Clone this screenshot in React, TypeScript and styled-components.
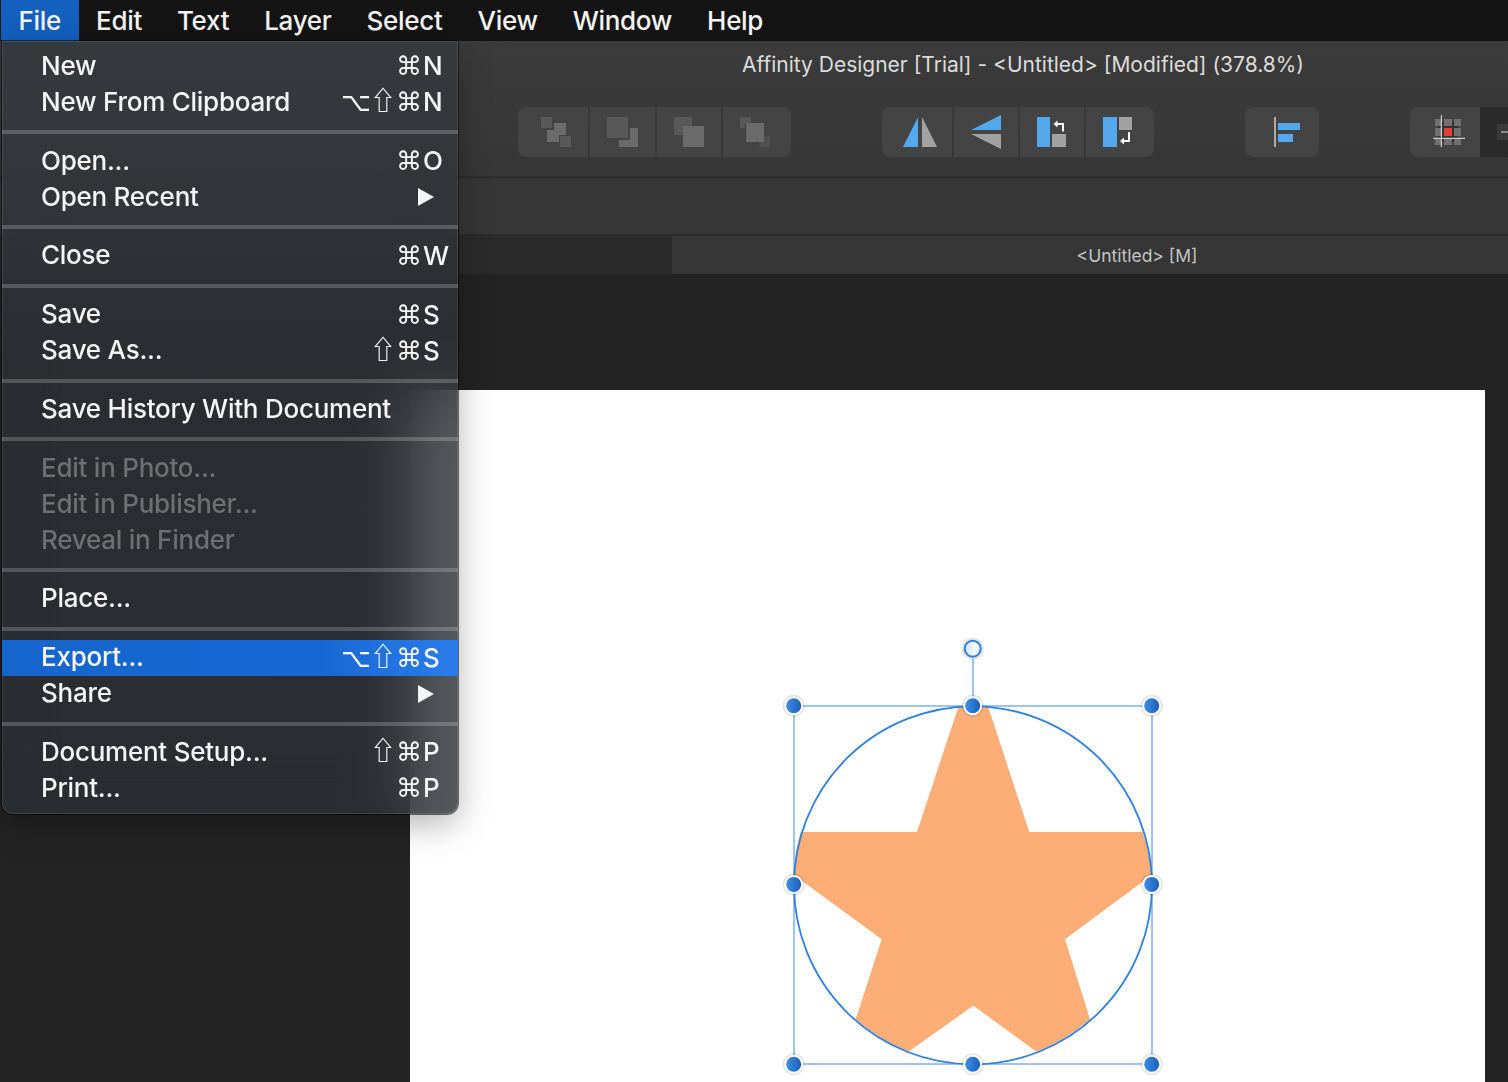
import { type ReactNode } from 'react'
import styled, { createGlobalStyle } from 'styled-components'

const GlobalStyle = createGlobalStyle`
  html, body {
    margin: 0;
    padding: 0;
    background: #232323;
  }

  body {
    font-family: Inter, "Liberation Sans", sans-serif;
  }
`

const Window = styled.div`
  position: relative;
  width: 1508px;
  height: 1082px;
  overflow: hidden;
  display: flex;
  flex-direction: column;
  background: #232323;
`

const MenuBar = styled.div`
  display: flex;
  height: 41px;
  padding-left: 1px;
  background: #141414;
  flex-shrink: 0;
`

const BarItem = styled.div<{ $active?: boolean }>`
  display: flex;
  align-items: center;
  padding: 0 17.5px;
  font-size: 26px;
  font-weight: 450;
  letter-spacing: -0.3px;
  color: #f4f4f4;
  background: ${p => (p.$active ? '#1360bf' : 'transparent')};
`

const Chrome = styled.div`
  flex-shrink: 0;
  background: linear-gradient(#3b3b3b, #353535);
`

const TitleBar = styled.div`
  height: 48px;
  box-sizing: border-box;
  padding: 0 0 2px 538px;
  display: flex;
  align-items: center;
  justify-content: center;
  font-size: 21px;
  color: #dcdcdc;
`

const Toolbar = styled.div`
  display: flex;
  gap: 91px;
  padding: 18px 0 19px 518px;
  border-bottom: 2px solid #2d2d2d;
`

const ToolGroup = styled.div<{ $flat?: boolean }>`
  display: flex;
  gap: 2px;
  height: 50px;
  border-radius: ${p => (p.$flat ? '8px 0 0 8px' : '8px')};
  overflow: hidden;
  flex-shrink: 0;
`

const ToolButton = styled.div<{ $w: number }>`
  width: ${p => p.$w}px;
  height: 50px;
  background: #444444;

  svg {
    display: block;
  }
`

const SnapCluster = styled.div`
  display: flex;
  flex-shrink: 0;
`

const ZoomSlot = styled.div`
  display: flex;
  align-items: center;
  width: 120px;
  height: 50px;
  padding-left: 17px;
  background: #2a2a2a;
  flex-shrink: 0;
`

const ZoomMinus = styled.div`
  display: flex;
  align-items: center;
  width: 40px;
  height: 16px;
  padding-left: 4px;
  background: #3a3a3a;

  &::before {
    content: '';
    width: 7px;
    height: 2px;
    background: #8a8a8a;
  }
`

const ContextBar = styled.div`
  height: 56px;
  background: #363636;
`

const TabBar = styled.div`
  display: flex;
  height: 40px;
  box-sizing: border-box;
  padding: 2px 0 0 672px;
  flex-shrink: 0;
  background: #2b2b2b;
`

const Tab = styled.div`
  flex: 1;
  padding-left: 94px;
  display: flex;
  align-items: center;
  justify-content: center;
  background: #363636;
  font-size: 17.5px;
  color: #c4c4c4;
`

const Canvas = styled.div`
  flex: 1;
  padding: 116px 23px 0 410px;
  background: #232323;
`

const Artboard = styled.div`
  height: 100%;
  background: #ffffff;

  svg {
    display: block;
  }
`

const Menu = styled.div`
  position: absolute;
  top: 41px;
  left: 2px;
  width: 456px;
  height: 773px;
  box-sizing: border-box;
  padding: 7.3px 0 7.7px;
  border-radius: 0 0 11px 11px;
  background: linear-gradient(rgba(54, 58, 62, 0.8), rgba(44, 48, 52, 0.8) 45%);
  backdrop-filter: blur(30px);
  box-shadow: inset 0 0 0 1px rgba(255, 255, 255, 0.1), 0 0 0 1px rgba(0, 0, 0, 0.55),
    0 10px 34px rgba(0, 0, 0, 0.3);
`

const Row = styled.div<{ $active?: boolean; $disabled?: boolean }>`
  display: grid;
  grid-template-columns: 300px 1fr;
  grid-template-rows: 36px;
  align-items: center;
  height: 36px;
  padding-left: 39px;
  font-size: 26px;
  font-weight: 450;
  letter-spacing: -0.25px;
  white-space: nowrap;
  color: ${p => (p.$disabled ? '#6d7073' : '#f5f5f5')};
  background: ${p =>
    p.$active ? 'linear-gradient(90deg, #1565cc 0%, #1868d4 70%, #2a7de9 100%)' : 'transparent'};
`

const RowLabel = styled.span`
  margin-bottom: 2px;
`

const Separator = styled.div`
  height: 4px;
  margin: 10px 0 8.75px;
  background: rgba(255, 255, 255, 0.2);
`

const Keys = styled.div`
  display: grid;
  grid-template-columns: 29px 26px 27px auto;
  grid-template-rows: 36px;
  height: 36px;
  overflow: visible;
`

const Key = styled.span`
  height: 36px;
  font-family: "DejaVu Sans", sans-serif;
  font-size: 26px;
  line-height: 36px;
`

const ShiftKey = styled(Key)`
  font-family: "Noto Sans CJK JP", "DejaVu Sans", sans-serif;
  transform: translateY(-3px);
`

const KeyLetter = styled.span`
  height: 36px;
  font-size: 26px;
  line-height: 36px;
`

const Arrow = styled.span`
  width: 0;
  height: 0;
  margin-left: 77px;
  border-left: 16px solid #f5f5f5;
  border-top: 9px solid transparent;
  border-bottom: 9px solid transparent;
`

type ToolIconProps = {
  x: number
  w: number
  children: ReactNode
}

// viewBox follows the page coordinates of the toolbar row, easier to measure against
const ToolIcon = ({ x, w, children }: ToolIconProps) => (
  <ToolButton $w={w}>
    <svg width={w} height={50} viewBox={`${x} 107 ${w} 50`}>
      {children}
    </svg>
  </ToolButton>
)

const DIM = '#585858'
const MID = '#6b6b6b'
const BLUE = '#56a8ec'
const GREY = '#a2a2a2'

const ArrangeGroup = () => (
  <ToolGroup>
    <ToolIcon x={518} w={70}>
      <rect x={541} y={117} width={11} height={11} fill={DIM} />
      <rect x={554} y={123} width={12} height={12} fill={MID} />
      <rect x={547} y={130} width={12} height={12} fill={MID} />
      <rect x={560} y={136} width={11} height={11} fill={DIM} />
    </ToolIcon>
    <ToolIcon x={590} w={65}>
      <rect x={607} y={117} width={21} height={21} fill={DIM} />
      <path d="M630 128h8v19h-19v-7h11z" fill={MID} />
    </ToolIcon>
    <ToolIcon x={657} w={64}>
      <rect x={674} y={117} width={18} height={18} fill={DIM} />
      <rect x={683} y={126} width={21} height={21} fill={MID} />
    </ToolIcon>
    <ToolIcon x={723} w={68}>
      <rect x={740} y={117} width={11} height={11} fill={DIM} />
      <rect x={759} y={136} width={11} height={11} fill="#505050" />
      <rect x={745} y={123} width={19} height={19} fill="#3c3c3c" />
      <rect x={746} y={123} width={18} height={19} fill={MID} />
    </ToolIcon>
  </ToolGroup>
)

const FlipGroup = () => (
  <ToolGroup>
    <ToolIcon x={882} w={70}>
      <path d="M903 147l15-30v30z" fill={BLUE} />
      <path d="M922 117l15 30h-15z" fill={GREY} />
    </ToolIcon>
    <ToolIcon x={954} w={64}>
      <path d="M1001 115v15h-30z" fill={BLUE} />
      <path d="M971 134h30v15z" fill={GREY} />
    </ToolIcon>
    <ToolIcon x={1020} w={64}>
      <rect x={1037} y={117} width={13} height={30} fill={BLUE} />
      <rect x={1052} y={134} width={14} height={13} fill={GREY} />
      <path d="M1063 131.5v-7.5h-6" fill="none" stroke="#ffffff" strokeWidth={2} />
      <path d="M1053.5 124l4-3.5v7z" fill="#ffffff" />
    </ToolIcon>
    <ToolIcon x={1086} w={68}>
      <rect x={1103} y={117} width={14} height={30} fill={BLUE} />
      <rect x={1119} y={117} width={13} height={13} fill={GREY} />
      <path d="M1129 132v9h-6" fill="none" stroke="#ffffff" strokeWidth={2} />
      <path d="M1120 141l4-3.5v7z" fill="#ffffff" />
    </ToolIcon>
  </ToolGroup>
)

const AlignGroup = () => (
  <ToolGroup>
    <ToolIcon x={1245} w={74}>
      <rect x={1274} y={117} width={2} height={30} fill="#aaaaaa" />
      <rect x={1278} y={123} width={22} height={7} fill={BLUE} />
      <rect x={1278} y={134} width={15} height={8} fill={BLUE} />
    </ToolIcon>
  </ToolGroup>
)

const SnapCells = [
  [1435, 119, 7, 7],
  [1444, 119, 8, 7],
  [1454, 119, 7, 7],
  [1435, 128, 7, 8],
  [1454, 128, 7, 8],
  [1435, 138, 7, 7],
  [1444, 138, 8, 7],
  [1454, 138, 7, 7],
]

const SnapGroup = () => (
  <ToolGroup $flat>
    <ToolIcon x={1410} w={70}>
      <rect x={1438} y={122} width={20} height={20} fill="#333333" />
      {SnapCells.map(([x, y, w, h]) => (
        <rect key={`${x}-${y}`} x={x} y={y} width={w} height={h} fill="#707070" />
      ))}
      <rect x={1444} y={128} width={8} height={8} fill="#e83c3c" />
      <path d="M1441.3 115v32M1433 138.3h32" stroke="#e8e8e8" strokeWidth={1} fill="none" />
    </ToolIcon>
  </ToolGroup>
)

type MenuEntry = {
  label?: string
  keys?: string
  arrow?: boolean
  active?: boolean
  disabled?: boolean
}

const MENU: MenuEntry[] = [
  { label: 'New', keys: '⌘N' },
  { label: 'New From Clipboard', keys: '⌥⇧⌘N' },
  {},
  { label: 'Open...', keys: '⌘O' },
  { label: 'Open Recent', arrow: true },
  {},
  { label: 'Close', keys: '⌘W' },
  {},
  { label: 'Save', keys: '⌘S' },
  { label: 'Save As...', keys: '⇧⌘S' },
  {},
  { label: 'Save History With Document' },
  {},
  { label: 'Edit in Photo...', disabled: true },
  { label: 'Edit in Publisher...', disabled: true },
  { label: 'Reveal in Finder', disabled: true },
  {},
  { label: 'Place...' },
  {},
  { label: 'Export...', keys: '⌥⇧⌘S', active: true },
  { label: 'Share', arrow: true },
  {},
  { label: 'Document Setup...', keys: '⇧⌘P' },
  { label: 'Print...', keys: '⌘P' },
]

const Shortcut = ({ keys }: { keys: string }) => {
  const letter = keys.slice(-1)
  return (
    <Keys>
      <Key>{keys.includes('⌥') ? '⌥' : ''}</Key>
      <ShiftKey>{keys.includes('⇧') ? '⇧' : ''}</ShiftKey>
      <Key>⌘</Key>
      <KeyLetter>{letter}</KeyLetter>
    </Keys>
  )
}

const HANDLES = [
  [793.7, 705.7],
  [972.7, 705.7],
  [1151.7, 705.7],
  [793.7, 884.4],
  [1151.7, 884.4],
  [793.7, 1064.3],
  [972.7, 1064.3],
  [1151.7, 1064.3],
]

const STAR =
  'M958.3 707.3 L988.3 707.3 L1029.3 832 L1142.7 832 A179 179 0 0 1 1151.7 875 ' +
  'L1065 939.3 L1090 1019.3 A179 179 0 0 1 1036.7 1051.7 L973.3 1005.7 ' +
  'L908.3 1051.7 A179 179 0 0 1 855.7 1019.3 L881.7 939.3 L794 875 ' +
  'A179 179 0 0 1 800.7 832 L917 832 Z'

const Selection = () => (
  <svg width={1075} height={692} viewBox="410 390 1075 692">
    <defs>
      <linearGradient id="knob" x1="0" x2="1" y1="0" y2="0">
        <stop offset="0" stopColor="#3d8fe6" />
        <stop offset="1" stopColor="#1a5fb8" />
      </linearGradient>
      <linearGradient id="ring" x1="0" x2="1" y1="0" y2="0">
        <stop offset="0" stopColor="#d5e8fb" />
        <stop offset="1" stopColor="#ffffff" />
      </linearGradient>
    </defs>
    <path d={STAR} fill="#fdad76" />
    <rect x={794} y={706} width={358} height={358} fill="none" stroke="#7db1ee" strokeWidth={1.5} />
    <path d="M973 659V700" stroke="#7db1ee" strokeWidth={1.5} fill="none" />
    <circle cx={973} cy={885.3} r={179} fill="none" stroke="#2f80e0" strokeWidth={1.8} />
    <circle cx={972.7} cy={648.7} r={11} fill="#000000" fillOpacity={0.1} />
    <circle cx={972.7} cy={648.7} r={8} fill="url(#ring)" stroke="#2f80e0" strokeWidth={2} />
    {HANDLES.map(([x, y]) => (
      <g key={`${x}-${y}`}>
        <circle cx={x} cy={y} r={11} fill="#000000" fillOpacity={0.1} />
        <circle cx={x} cy={y} r={9.5} fill="#ffffff" />
        <circle cx={x} cy={y} r={7.5} fill="url(#knob)" />
      </g>
    ))}
  </svg>
)

const App = () => (
  <Window>
    <GlobalStyle />
    <MenuBar>
      <BarItem $active>File</BarItem>
      <BarItem>Edit</BarItem>
      <BarItem>Text</BarItem>
      <BarItem>Layer</BarItem>
      <BarItem>Select</BarItem>
      <BarItem>View</BarItem>
      <BarItem>Window</BarItem>
      <BarItem>Help</BarItem>
    </MenuBar>
    <Chrome>
      <TitleBar>Affinity Designer [Trial] - &lt;Untitled&gt; [Modified] (378.8%)</TitleBar>
      <Toolbar>
        <ArrangeGroup />
        <FlipGroup />
        <AlignGroup />
        <SnapCluster>
          <SnapGroup />
          <ZoomSlot>
            <ZoomMinus />
          </ZoomSlot>
        </SnapCluster>
      </Toolbar>
      <ContextBar />
    </Chrome>
    <TabBar>
      <Tab>&lt;Untitled&gt; [M]</Tab>
    </TabBar>
    <Canvas>
      <Artboard>
        <Selection />
      </Artboard>
    </Canvas>
    <Menu>
      {MENU.map((item, i) =>
        item.label ? (
          <Row key={item.label} $active={item.active} $disabled={item.disabled}>
            <RowLabel>{item.label}</RowLabel>
            {item.keys && <Shortcut keys={item.keys} />}
            {item.arrow && <Arrow />}
          </Row>
        ) : (
          <Separator key={i} />
        ),
      )}
    </Menu>
  </Window>
)

export default App
